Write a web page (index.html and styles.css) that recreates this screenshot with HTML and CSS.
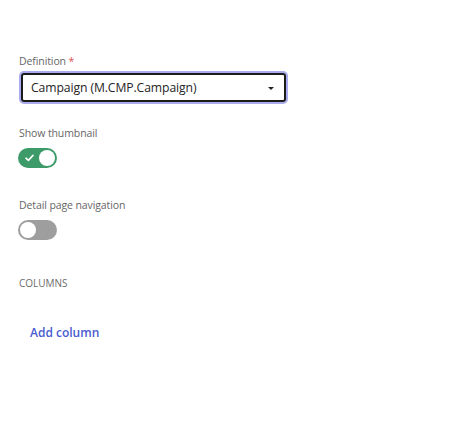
FILE: index.html
```html
<!DOCTYPE html>
<html>
<head>
<meta charset="utf-8">
<link rel="stylesheet" href="styles.css">
</head>
<body>
<div class="form">
  <div class="field field-def">
    <label class="label">Definition <span class="req">*</span></label>
    <div class="select">
      <span class="select-text">Campaign (M.CMP.Campaign)</span>
      <span class="caret"></span>
    </div>
  </div>
  <div class="field field-thumb">
    <label class="label">Show thumbnail</label>
    <div class="toggle on">
      <svg class="check" width="9" height="8" viewBox="0 0 9 8"><path d="M1 4.2 L3.4 6.4 L8 1.4" fill="none" stroke="#fff" stroke-width="1.6" stroke-linecap="round" stroke-linejoin="round"/></svg>
      <span class="knob"></span>
    </div>
  </div>
  <div class="field field-nav">
    <label class="label">Detail page navigation</label>
    <div class="toggle off">
      <span class="knob"></span>
    </div>
  </div>
  <div class="section">COLUMNS</div>
  <a class="add" href="#">Add column</a>
</div>
</body>
</html>
```
FILE: styles.css
```css
* { box-sizing: border-box; }
html, body { margin: 0; padding: 0; background: #fff; }
body {
  font-family: "Open Sans", "Noto Sans", "Liberation Sans", sans-serif;
  width: 474px;
  height: 426px;
  overflow: hidden;
}
.form {
  padding: 54px 0 0 19px;
  display: flex;
  flex-direction: column;
  align-items: flex-start;
}
.field { display: flex; flex-direction: column; align-items: flex-start; }
.label {
  font-size: 10.5px;
  line-height: 14px;
  color: #666;
  letter-spacing: -0.1px;
}
.req { color: #d9534f; }
.select {
  margin-top: 5px;
  margin-left: 2px;
  width: 265px;
  height: 29px;
  border: 2px solid #1b1b1b;
  border-radius: 3px;
  box-shadow: 0 0 0 2px #a9abec;
  display: flex;
  align-items: center;
  justify-content: space-between;
  padding: 0 10px 0 8px;
}
.select-text {
  font-size: 12.2px;
  color: #252525;
  letter-spacing: -0.1px;
}
.caret {
  width: 0; height: 0;
  border-left: 3px solid transparent;
  border-right: 3px solid transparent;
  border-top: 3px solid #222;
  margin-top: 1px;
}
.field-thumb { margin-top: 24px; }
.field-nav { margin-top: 30px; }
.toggle {
  margin-top: 8px;
  margin-left: -1px;
  width: 39px;
  height: 20px;
  border-radius: 10px;
  display: flex;
  align-items: center;
  padding: 0 3px;
}
.toggle.on {
  background: #3d9a69;
  justify-content: space-between;
  padding-left: 7px;
}
.toggle.off {
  background: #9e9e9e;
  justify-content: flex-start;
  padding-left: 2px;
}
.knob {
  width: 16px;
  height: 16px;
  border-radius: 50%;
  background: #fff;
  display: block;
}
.toggle.on .knob { margin-right: -1px; }
.check { display: block; }
.section {
  margin-top: 36px;
  font-size: 10px;
  line-height: 14px;
  color: #6b6b6b;
  letter-spacing: 0;
}
.add {
  margin-top: 34px;
  margin-left: 11px;
  font-size: 12px;
  font-weight: 600;
  color: #4a5ccf;
  text-decoration: none;
}
```
